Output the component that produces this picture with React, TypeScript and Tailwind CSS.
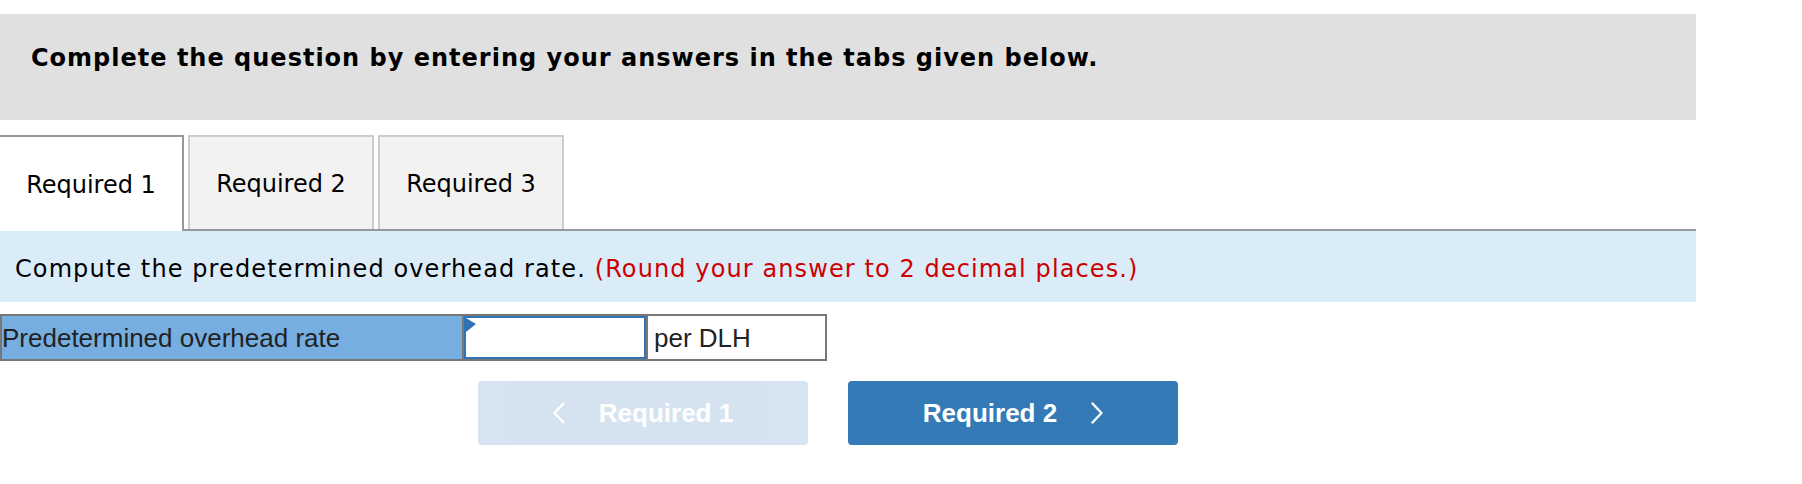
const verdana = { fontFamily: "Verdana, 'DejaVu Sans', sans-serif" };
const arial = { fontFamily: "Arial, 'Liberation Sans', sans-serif" };

function Chevron({ dir }: { dir: "left" | "right" }) {
  return (
    <svg width="12" height="22" viewBox="0 0 12 22" fill="none">
      <polyline
        points={dir === "right" ? "1.5,1.5 10.5,11 1.5,20.5" : "10.5,1.5 1.5,11 10.5,20.5"}
        stroke="currentColor"
        strokeWidth="2.4"
        strokeLinecap="round"
        strokeLinejoin="round"
      />
    </svg>
  );
}

function Tab({ label, active }: { label: string; active?: boolean }) {
  if (active) {
    return (
      <div className="flex h-[96px] w-[184px] items-center justify-center border-t-2 border-r-2 border-[#999] bg-white pt-[2px] text-[24px] text-black">
        {label}
      </div>
    );
  }
  return (
    <div className="flex h-[94px] w-[186px] items-center justify-center border-2 border-b-0 border-[#ccc] bg-[#f2f2f2] pt-[2px] text-[24px] text-black">
      {label}
    </div>
  );
}

export default function App() {
  return (
    <div className="min-h-screen bg-white pt-[14px]" style={verdana}>
      <div className="h-[106px] w-[1696px] bg-[#e0e0e0] pl-[31px] pt-[29px]">
        <h1 className="text-[24px] font-bold leading-[30px] tracking-[1px] text-black">
          Complete the question by entering your answers in the tabs given below.
        </h1>
      </div>

      <div className="mt-[15px] flex w-[1696px] items-start">
        <Tab label="Required 1" active />
        <div className="flex h-[96px] flex-1 gap-[4px] border-b-2 border-[#999] pl-[4px]">
          <Tab label="Required 2" />
          <Tab label="Required 3" />
        </div>
      </div>

      <div className="flex h-[71px] w-[1696px] items-center bg-[#dbecf9] pl-[15px] pt-[4px] text-[24px] tracking-[1.1px] text-black">
        <p>
          Compute the predetermined overhead rate.{" "}
          <span className="text-[#c00]">(Round your answer to 2 decimal places.)</span>
        </p>
      </div>

      <div
        className="mt-[12px] flex h-[47px] w-[827px] border-2 border-[#777] text-[26px] text-[#222]"
        style={arial}
      >
        <div className="flex w-[460px] items-center bg-[#76aee1] leading-none">
          Predetermined overhead rate
        </div>
        <div className="w-[2px] bg-[#777]" />
        <div className="relative w-[182px] border-2 border-[#2f74b5] bg-white">
          <svg className="absolute left-0 top-0" width="10" height="14" viewBox="0 0 10 14">
            <path d="M0 0 L10 6 L0 14 Z" fill="#2f74b5" />
          </svg>
        </div>
        <div className="w-[2px] bg-[#777]" />
        <div className="flex flex-1 items-center bg-white pl-[6px] leading-none">
          per DLH
        </div>
      </div>

      <div className="mt-[20px] flex gap-[40px] pl-[478px]" style={arial}>
        <button className="flex h-[64px] w-[330px] items-center justify-center gap-[34px] rounded-[4px] bg-[#337ab7] text-[26px] font-bold text-white opacity-20">
          <Chevron dir="left" />
          <span>Required 1</span>
        </button>
        <button className="flex h-[64px] w-[330px] items-center justify-center gap-[34px] rounded-[4px] bg-[#337ab7] text-[26px] font-bold text-white">
          <span>Required 2</span>
          <Chevron dir="right" />
        </button>
      </div>
    </div>
  );
}
